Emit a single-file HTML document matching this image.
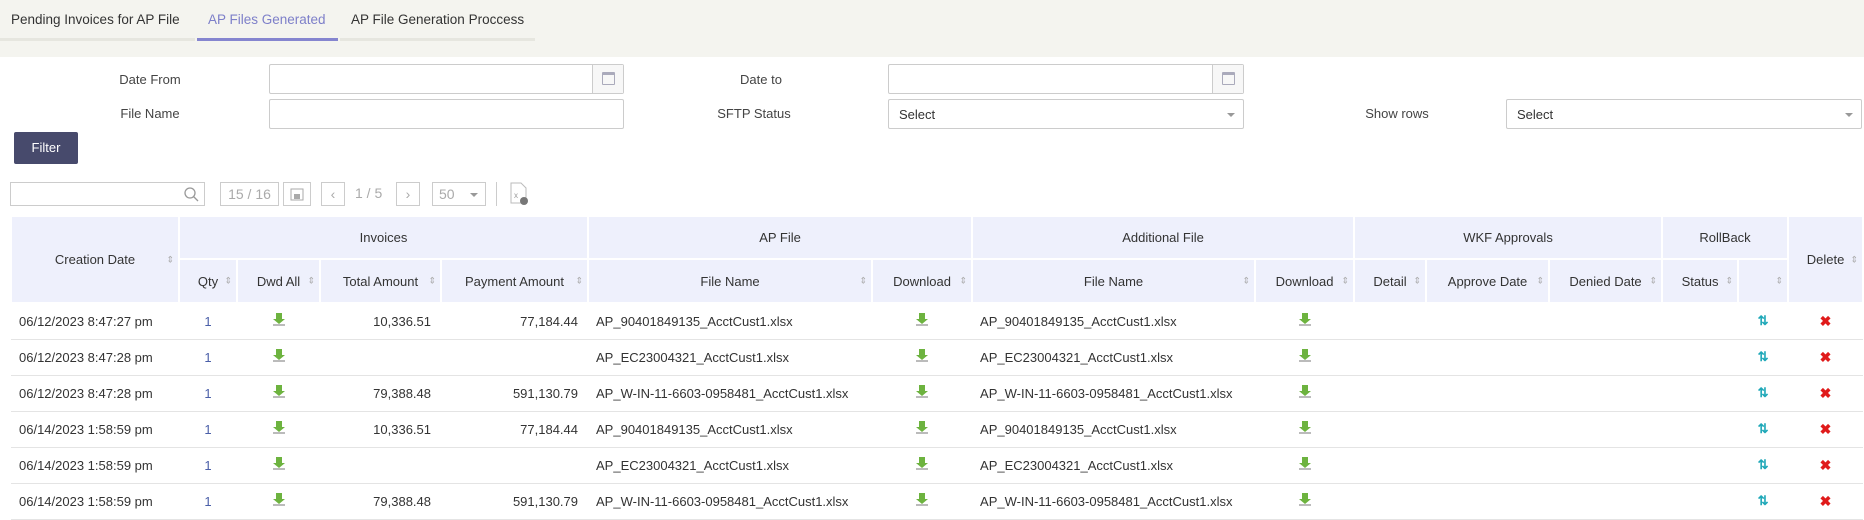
<!DOCTYPE html>
<html><head><meta charset="utf-8"><style>
*{box-sizing:border-box;margin:0;padding:0}
body{width:1864px;height:518px;background:#fff;font-family:"Liberation Sans",sans-serif;font-size:13px;color:#333;position:relative;overflow:hidden}
.top{position:absolute;left:0;top:0;width:1864px;height:57px;background:#f4f4ef}
.tab{position:absolute;top:12px;font-size:13.5px;color:#333}
.ul{position:absolute;top:38px;height:3px;background:#e6e6df}
.lbl{position:absolute;transform:translateX(-50%);font-size:13px;color:#444}
.inp{position:absolute;height:30px;border:1px solid #ccc;border-radius:2px;background:#fff}
.cal{position:absolute;right:0;top:0;width:31px;height:28px;border-left:1px solid #ccc;background:#f7f7f7}
.cal i{position:absolute;left:9px;top:7px;width:13px;height:13px;border:1px solid #aab;border-top:3px solid #aab;border-radius:1px}
.sel{font-size:13px;color:#333;padding:7px 10px}
.sel:after{content:"";position:absolute;right:8px;top:13px;border:4px solid transparent;border-top:4px solid #999}
.btn{position:absolute;left:14px;top:132px;width:64px;height:32px;background:#474a6c;color:#fff;border-radius:2px;text-align:center;line-height:32px;font-size:13px}
.tb{position:absolute;top:182px;height:24px;border:1px solid #ccc;background:#fff;color:#aaa;font-size:14px;text-align:center;line-height:22px}
table{position:absolute;left:10px;top:215px;border-collapse:collapse;table-layout:fixed;width:1852px}
th{background:#eef0fc;border:2px solid #fff;font-weight:normal;font-size:13px;color:#333;position:relative}
th.s:after{content:"⇕";position:absolute;right:4px;top:50%;transform:translateY(-50%);font-size:9px;color:#aaa}
td{height:36px;border-bottom:1px solid #e4e4e4;font-size:13px;white-space:nowrap}
.c{text-align:center}.r{text-align:right;padding-right:10px}.l{padding-left:8px}
.q{color:#4a5fa8;text-align:center}
.dl{display:inline-block;width:12px;height:13px;position:relative}
.dl:before{content:"";position:absolute;left:3px;top:0;width:6px;height:6px;background:#6db33f}
.dl:after{content:"";position:absolute;left:0;top:6px;border:6px solid transparent;border-top:5px solid #6db33f;border-bottom:0}
.dl i{position:absolute;left:0;bottom:0;width:12px;height:2px;background:#bbb}
.rf{color:#1fa8b8;font-weight:bold;font-size:13px}
.x{color:#e01b1b;font-weight:bold;font-size:14px}
</style></head><body>
<div class="top">
<div class="tab" style="left:11px">Pending Invoices for AP File</div>
<div class="tab" style="left:208px;color:#7d7fc9">AP Files Generated</div>
<div class="tab" style="left:351px">AP File Generation Proccess</div>
<div class="ul" style="left:0;width:195px"></div>
<div class="ul" style="left:197px;width:141px;background:#8585cf"></div>
<div class="ul" style="left:340px;width:195px"></div>
</div>
<div class="lbl" style="left:150px;top:72px">Date From</div>
<div class="inp" style="left:269px;top:64px;width:355px"><div class="cal"><i></i></div></div>
<div class="lbl" style="left:150px;top:106px">File Name</div>
<div class="inp" style="left:269px;top:99px;width:355px"></div>
<div class="lbl" style="left:761px;top:72px">Date to</div>
<div class="inp" style="left:888px;top:64px;width:356px"><div class="cal"><i></i></div></div>
<div class="lbl" style="left:754px;top:106px">SFTP Status</div>
<div class="inp sel" style="left:888px;top:99px;width:356px">Select</div>
<div class="lbl" style="left:1397px;top:106px">Show rows</div>
<div class="inp sel" style="left:1506px;top:99px;width:356px">Select</div>
<div class="btn">Filter</div>
<div class="tb" style="left:10px;width:195px"><svg style="position:absolute;right:5px;top:3px" width="16" height="16"><circle cx="7" cy="7" r="5" fill="none" stroke="#999" stroke-width="1.3"/><line x1="10.5" y1="10.5" x2="15" y2="15" stroke="#999" stroke-width="1.3"/></svg></div>
<div class="tb" style="left:220px;width:59px">15 / 16</div>
<div class="tb" style="left:283px;width:28px"><svg width="14" height="14" style="margin-top:4px"><rect x="1" y="2" width="12" height="11" fill="none" stroke="#aaa"/><rect x="4" y="7" width="6" height="5" fill="#aaa"/></svg></div>
<div class="tb" style="left:321px;width:24px">‹</div>
<div style="position:absolute;left:355px;top:185px;color:#aaa;font-size:14px">1 / 5</div>
<div class="tb" style="left:396px;width:24px">›</div>
<div class="tb" style="left:432px;width:54px;text-align:left;padding-left:6px">50<span style="position:absolute;right:7px;top:10px;border:4px solid transparent;border-top:4px solid #999"></span></div>
<div style="position:absolute;left:496px;top:182px;width:1px;height:24px;background:#ccc"></div>
<svg style="position:absolute;left:509px;top:182px" width="22" height="24"><path d="M2 1h10l5 5v15H2z" fill="#fff" stroke="#bbb"/><text x="5" y="16" font-size="8" fill="#999">x</text><circle cx="15" cy="19" r="4" fill="#777"/></svg>
<table>
<colgroup><col style="width:168px"><col style="width:58px"><col style="width:83px"><col style="width:121px"><col style="width:147px"><col style="width:284px"><col style="width:100px"><col style="width:283px"><col style="width:99px"><col style="width:72px"><col style="width:123px"><col style="width:113px"><col style="width:76px"><col style="width:50px"><col style="width:75px"></colgroup>
<tr style="height:43px"><th rowspan="2" class="s">Creation Date</th><th colspan="4">Invoices</th><th colspan="2">AP File</th><th colspan="2">Additional File</th><th colspan="3">WKF Approvals</th><th colspan="2">RollBack</th><th rowspan="2" class="s">Delete</th></tr>
<tr style="height:44px"><th class="s">Qty</th><th class="s">Dwd All</th><th class="s">Total Amount</th><th class="s">Payment Amount</th><th class="s">File Name</th><th class="s">Download</th><th class="s">File Name</th><th class="s">Download</th><th class="s">Detail</th><th class="s">Approve Date</th><th class="s">Denied Date</th><th class="s">Status</th><th class="s"></th></tr>
<tr><td class="l">06/12/2023 8:47:27 pm</td><td class="q">1</td><td class="c"><span class="dl"><i></i></span></td><td class="r">10,336.51</td><td class="r">77,184.44</td><td class="l">AP_90401849135_AcctCust1.xlsx</td><td class="c"><span class="dl"><i></i></span></td><td class="l">AP_90401849135_AcctCust1.xlsx</td><td class="c"><span class="dl"><i></i></span></td><td></td><td></td><td></td><td></td><td class="c rf">⇅</td><td class="c x">✖</td></tr>
<tr><td class="l">06/12/2023 8:47:28 pm</td><td class="q">1</td><td class="c"><span class="dl"><i></i></span></td><td class="r"></td><td class="r"></td><td class="l">AP_EC23004321_AcctCust1.xlsx</td><td class="c"><span class="dl"><i></i></span></td><td class="l">AP_EC23004321_AcctCust1.xlsx</td><td class="c"><span class="dl"><i></i></span></td><td></td><td></td><td></td><td></td><td class="c rf">⇅</td><td class="c x">✖</td></tr>
<tr><td class="l">06/12/2023 8:47:28 pm</td><td class="q">1</td><td class="c"><span class="dl"><i></i></span></td><td class="r">79,388.48</td><td class="r">591,130.79</td><td class="l">AP_W-IN-11-6603-0958481_AcctCust1.xlsx</td><td class="c"><span class="dl"><i></i></span></td><td class="l">AP_W-IN-11-6603-0958481_AcctCust1.xlsx</td><td class="c"><span class="dl"><i></i></span></td><td></td><td></td><td></td><td></td><td class="c rf">⇅</td><td class="c x">✖</td></tr>
<tr><td class="l">06/14/2023 1:58:59 pm</td><td class="q">1</td><td class="c"><span class="dl"><i></i></span></td><td class="r">10,336.51</td><td class="r">77,184.44</td><td class="l">AP_90401849135_AcctCust1.xlsx</td><td class="c"><span class="dl"><i></i></span></td><td class="l">AP_90401849135_AcctCust1.xlsx</td><td class="c"><span class="dl"><i></i></span></td><td></td><td></td><td></td><td></td><td class="c rf">⇅</td><td class="c x">✖</td></tr>
<tr><td class="l">06/14/2023 1:58:59 pm</td><td class="q">1</td><td class="c"><span class="dl"><i></i></span></td><td class="r"></td><td class="r"></td><td class="l">AP_EC23004321_AcctCust1.xlsx</td><td class="c"><span class="dl"><i></i></span></td><td class="l">AP_EC23004321_AcctCust1.xlsx</td><td class="c"><span class="dl"><i></i></span></td><td></td><td></td><td></td><td></td><td class="c rf">⇅</td><td class="c x">✖</td></tr>
<tr><td class="l">06/14/2023 1:58:59 pm</td><td class="q">1</td><td class="c"><span class="dl"><i></i></span></td><td class="r">79,388.48</td><td class="r">591,130.79</td><td class="l">AP_W-IN-11-6603-0958481_AcctCust1.xlsx</td><td class="c"><span class="dl"><i></i></span></td><td class="l">AP_W-IN-11-6603-0958481_AcctCust1.xlsx</td><td class="c"><span class="dl"><i></i></span></td><td></td><td></td><td></td><td></td><td class="c rf">⇅</td><td class="c x">✖</td></tr>
</table>
</body></html>
